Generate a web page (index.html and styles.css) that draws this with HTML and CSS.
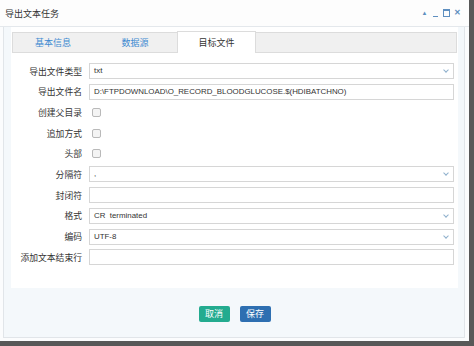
FILE: index.html
```html
<!DOCTYPE html>
<html>
<head>
<meta charset="utf-8">
<link rel="stylesheet" href="styles.css">
</head>
<body>
<div class="window">
  <div class="titlebar">
    <span class="title">导出文本任务</span>
    <div class="tools">
      <span class="tool">&#9650;</span>
      <span class="tool min"></span>
      <span class="tool max"></span>
      <span class="tool x">&#10005;</span>
    </div>
  </div>
  <div class="frame">
    <div class="panel">
      <div class="tabs">
        <div class="tab t1">基本信息</div>
        <div class="tab t2">数据源</div>
        <div class="tab active">目标文件</div>
      </div>
      <div class="form">
        <div class="row"><label>导出文件类型</label><div class="field select">txt<span class="arrow"></span></div></div>
        <div class="row"><label>导出文件名</label><div class="field">D:\FTPDOWNLOAD\O_RECORD_BLOODGLUCOSE.$(HDIBATCHNO)</div></div>
        <div class="row"><label>创建父目录</label><span class="check"></span></div>
        <div class="row"><label>追加方式</label><span class="check"></span></div>
        <div class="row"><label>头部</label><span class="check"></span></div>
        <div class="row"><label>分隔符</label><div class="field select">,<span class="arrow"></span></div></div>
        <div class="row"><label>封闭符</label><div class="field"></div></div>
        <div class="row"><label>格式</label><div class="field select">CR&nbsp; terminated<span class="arrow"></span></div></div>
        <div class="row"><label>编码</label><div class="field select">UTF-8<span class="arrow"></span></div></div>
        <div class="row"><label>添加文本结束行</label><div class="field"></div></div>
      </div>
    </div>
    <div class="footer">
      <button class="btn cancel">取消</button>
      <button class="btn save">保存</button>
    </div>
  </div>
</div>
</body>
</html>
```
FILE: styles.css
```css
html, body {
  margin: 0;
  padding: 0;
  width: 474px;
  height: 346px;
  background: #585858;
  overflow: hidden;
  font-family: "Liberation Sans", "Noto Sans CJK SC", sans-serif;
}
.window {
  width: 469px;
  height: 341px;
  background: #fbfcfd;
  box-sizing: border-box;
  display: flex;
  flex-direction: column;
}
.titlebar {
  height: 27px;
  box-sizing: border-box;
  border-bottom: 1px solid #e4e8ec;
  display: flex;
  align-items: center;
  padding: 0 8px 0 5px;
  background: #fdfdfd;
}
.title {
  font-family: "Noto Sans CJK SC", sans-serif;
  font-size: 9px;
  color: #333;
  flex: 1;
}
.tools {
  display: flex;
  align-items: center;
  gap: 4px;
  color: #5e8fc0;
}
.tool {
  width: 7px;
  height: 8px;
  font-size: 6px;
  line-height: 8px;
  text-align: center;
  display: inline-block;
}
.tool.min {
  border-bottom: 1.5px solid #5e8fc0;
  width: 5px;
  height: 6px;
  margin: 0 1px;
}
.tool.max {
  width: 5px;
  height: 5px;
  border: 1.5px solid #5e8fc0;
  border-top-width: 2px;
}
.tool.x {
  font-size: 8px;
  font-weight: bold;
}
.frame {
  flex: 1;
  margin: 0 4px 3px 3px;
  border: 1px solid #e1e5e9;
  border-top: none;
  background: #f4f8fb;
  display: flex;
  flex-direction: column;
}
.panel {
  background: #fff;
  margin: 0 6px 0 7px;
  padding-top: 5px;
  height: 261px;
  box-sizing: border-box;
}
.tabs {
  margin: 0 1px 0 1px;
  height: 21px;
  box-sizing: border-box;
  background: #f0f0f0;
  border: 1px solid #dcdcdc;
  display: flex;
  align-items: stretch;
  font-family: "Noto Sans CJK SC", sans-serif;
  font-size: 9px;
}
.tab {
  display: flex;
  align-items: center;
  justify-content: center;
  color: #3d8ad0;
}
.t1 { width: 80px; }
.t2 { width: 84px; }
.tab.active {
  width: 77px;
  background: #fff;
  color: #333;
  margin-top: -2px;
  margin-bottom: -1px;
  border: 1px solid #dcdcdc;
  border-bottom: none;
}
.form {
  padding-top: 10px;
  display: flex;
  flex-direction: column;
  gap: 4.7px;
}
.row {
  display: flex;
  align-items: center;
  height: 16px;
}
.row label {
  width: 71px;
  text-align: right;
  font-family: "Noto Sans CJK SC", sans-serif;
  font-size: 8.8px;
  color: #333;
  margin-right: 7px;
}
.field {
  width: 365px;
  height: 16px;
  box-sizing: border-box;
  border: 1px solid #d6d6d6;
  font-size: 7.9px;
  color: #333;
  padding-left: 4px;
  line-height: 14px;
  position: relative;
  white-space: nowrap;
}
.arrow {
  position: absolute;
  right: 5px;
  top: 4px;
  width: 3px;
  height: 3px;
  border-right: 1px solid #8fb0cc;
  border-bottom: 1px solid #8fb0cc;
  transform: rotate(45deg);
}
.check {
  width: 7px;
  height: 7px;
  border: 1px solid #b9b9b9;
  border-radius: 2px;
  background: #f4f4f4;
  margin-left: 3px;
}
.footer {
  flex: 1;
  display: flex;
  justify-content: center;
  align-items: center;
  gap: 10px;
  padding-left: 1px;
  padding-top: 2px;
}
.btn {
  width: 31px;
  height: 16px;
  border: none;
  border-radius: 2px;
  color: #fff;
  font-family: "Noto Sans CJK SC", sans-serif;
  font-size: 9px;
  padding: 0;
  line-height: 16px;
}
.cancel { background: #23ab8f; }
.save { background: #2e6fb1; }
```
